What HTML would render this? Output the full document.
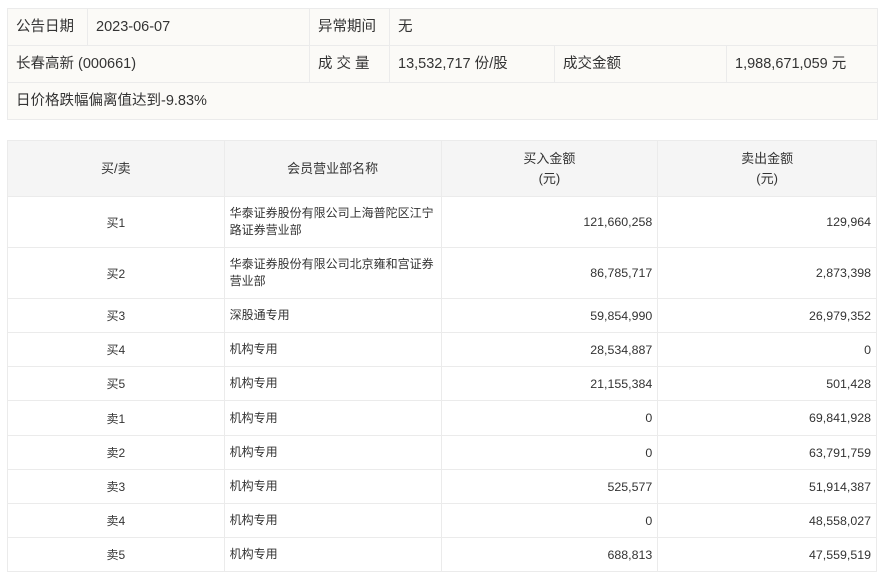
<!DOCTYPE html>
<html><head><meta charset="utf-8"><style>
body{margin:0;background:#fff;font-family:"Liberation Sans","Noto Sans CJK SC",sans-serif;color:#333;}
.box{position:absolute;left:7px;top:8px;width:869px;height:110px;background:#fbfaf7;border:1px solid #ebebeb;}
.c{position:absolute;font-size:14.5px;line-height:37px;}
.hl{position:absolute;left:0;width:869px;height:1px;background:#ebebeb;}
.vl{position:absolute;width:1px;background:#ebebeb;}
table{position:absolute;left:7px;top:140px;border-collapse:collapse;width:870px;font-size:12.4px;}
td{border:1px solid #ebebeb;padding:0 4px;}
tr.h td{background:#f5f5f5;text-align:center;height:55px;font-size:13px;line-height:20px;}
td.a{text-align:center;font-size:12px;}
td.n{text-align:right;padding-right:5px;}
td.m{line-height:17px;padding-left:5px;font-size:12px;white-space:nowrap;}
</style></head><body>
<div class="box">
<div class="hl" style="top:36px"></div><div class="hl" style="top:73px"></div>
<div class="vl" style="left:79px;top:0;height:36px"></div>
<div class="vl" style="left:301px;top:0;height:73px"></div>
<div class="vl" style="left:381px;top:0;height:73px"></div>
<div class="vl" style="left:546px;top:37px;height:36px"></div>
<div class="vl" style="left:718px;top:37px;height:36px"></div>
<div class="c" style="left:8px;top:0">公告日期</div>
<div class="c" style="left:88px;top:0">2023-06-07</div>
<div class="c" style="left:310px;top:0">异常期间</div>
<div class="c" style="left:390px;top:0">无</div>
<div class="c" style="left:8px;top:37px">长春高新 (000661)</div>
<div class="c" style="left:310px;top:37px">成 交 量</div>
<div class="c" style="left:390px;top:37px">13,532,717 份/股</div>
<div class="c" style="left:555px;top:37px">成交金额</div>
<div class="c" style="left:727px;top:37px">1,988,671,059 元</div>
<div class="c" style="left:8px;top:74px">日价格跌幅偏离值达到-9.83%</div>
</div>
<table>
<colgroup><col style="width:217px"><col style="width:217px"><col style="width:217px"><col style="width:219px"></colgroup>
<tr class="h"><td>买/卖</td><td>会员营业部名称</td><td>买入金额<br>(元)</td><td>卖出金额<br>(元)</td></tr>
<tr style="height:51px"><td class="a">买1</td><td class="m">华泰证券股份有限公司上海普陀区江宁<br>路证券营业部</td><td class="n">121,660,258</td><td class="n">129,964</td></tr>
<tr style="height:51px"><td class="a">买2</td><td class="m">华泰证券股份有限公司北京雍和宫证券<br>营业部</td><td class="n">86,785,717</td><td class="n">2,873,398</td></tr>
<tr style="height:34px"><td class="a">买3</td><td class="m">深股通专用</td><td class="n">59,854,990</td><td class="n">26,979,352</td></tr>
<tr style="height:34px"><td class="a">买4</td><td class="m">机构专用</td><td class="n">28,534,887</td><td class="n">0</td></tr>
<tr style="height:34px"><td class="a">买5</td><td class="m">机构专用</td><td class="n">21,155,384</td><td class="n">501,428</td></tr>
<tr style="height:35px"><td class="a">卖1</td><td class="m">机构专用</td><td class="n">0</td><td class="n">69,841,928</td></tr>
<tr style="height:34px"><td class="a">卖2</td><td class="m">机构专用</td><td class="n">0</td><td class="n">63,791,759</td></tr>
<tr style="height:34px"><td class="a">卖3</td><td class="m">机构专用</td><td class="n">525,577</td><td class="n">51,914,387</td></tr>
<tr style="height:34px"><td class="a">卖4</td><td class="m">机构专用</td><td class="n">0</td><td class="n">48,558,027</td></tr>
<tr style="height:34px"><td class="a">卖5</td><td class="m">机构专用</td><td class="n">688,813</td><td class="n">47,559,519</td></tr>
</table>
</body></html>
